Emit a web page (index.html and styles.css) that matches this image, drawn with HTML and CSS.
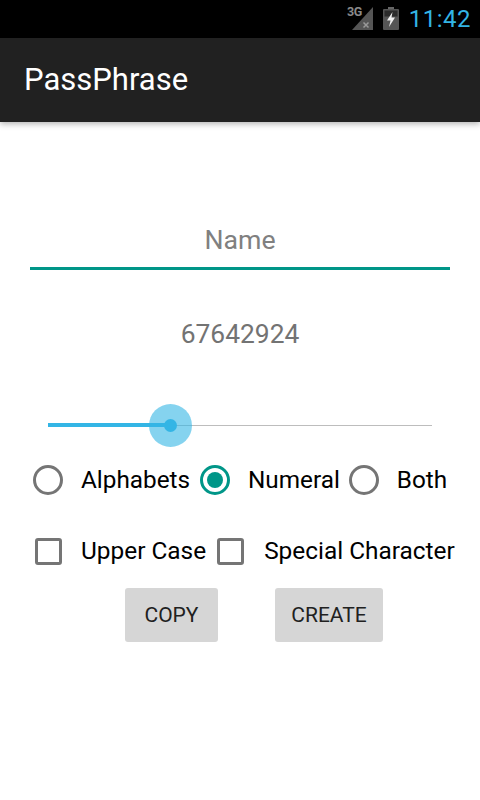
FILE: index.html
```html
<!DOCTYPE html>
<html lang="en">
<head>
<meta charset="utf-8">
<title>PassPhrase</title>
<link rel="stylesheet" href="styles.css">
</head>
<body>
<div class="status">
  <svg class="signal" width="22" height="23" viewBox="0 0 22 23">
    <polygon points="0,23 21,0 21,23" fill="#555"/>
    <path d="M11.5 15.5l5 5M16.5 15.5l-5 5" stroke="#999" stroke-width="1.5" fill="none"/>
  </svg>
  <span class="net">3G</span>
  <svg class="battery" width="16" height="23" viewBox="0 0 16 23">
    <rect x="5" y="0" width="6" height="3" fill="#666"/>
    <rect x="0" y="2" width="16" height="21" rx="1" fill="#555"/>
    <rect x="1.5" y="3.5" width="13" height="6" fill="#2b2b2b"/>
    <polygon points="9.5,5 4,13.5 7.5,13.5 6,20 12,10.5 8.5,10.5" fill="#eee"/>
  </svg>
  <span class="clock">11:42</span>
</div>
<header class="appbar">PassPhrase</header>
<main class="content">
  <div class="name">Name</div>
  <div class="code">67642924</div>
  <div class="slider">
    <div class="fill"></div>
    <div class="rest"></div>
    <div class="halo"><div class="dot"></div></div>
  </div>
  <div class="radios">
    <span class="radio"></span><span class="label first">Alphabets</span>
    <span class="radio on"></span><span class="label second">Numeral</span>
    <span class="radio"></span><span class="label">Both</span>
  </div>
  <div class="checks">
    <span class="check"></span><span class="label upper">Upper Case</span>
    <span class="check wide"></span><span class="label special">Special Character</span>
  </div>
  <div class="buttons">
    <button class="btn copy">COPY</button>
    <button class="btn create">CREATE</button>
  </div>
</main>
</body>
</html>
```
FILE: styles.css
```css
* { box-sizing: border-box; }
html, body { margin: 0; padding: 0; }
body {
  width: 480px;
  height: 800px;
  overflow: hidden;
  background: #fff;
  font-family: Roboto, sans-serif;
}
.status {
  position: relative;
  height: 38px;
  background: #000;
  display: flex;
  align-items: center;
  justify-content: flex-end;
  padding-right: 9px;
}
.signal { margin-right: 9px; margin-top: -1px; }
.net {
  position: absolute;
  left: 347px;
  top: 5px;
  font-size: 12.5px;
  font-weight: 700;
  line-height: 14px;
  letter-spacing: -0.3px;
  color: #8a8a8a;
}
.battery { margin-right: 10px; margin-top: -1px; }
.clock {
  font-size: 24px;
  line-height: 38px;
  color: #33b5e5;
  letter-spacing: 0.5px;
}
.appbar {
  height: 84px;
  background: #212121;
  color: #fff;
  font-size: 31px;
  line-height: 84px;
  padding-left: 24px;
  box-shadow: 0 2px 6px rgba(0, 0, 0, 0.3);
  position: relative;
}
.content { display: flex; flex-direction: column; }
.name {
  margin: 90px 30px 0;
  height: 58px;
  border-bottom: 3px solid #009688;
  color: #808080;
  font-size: 26.7px;
  line-height: 56px;
  text-align: center;
}
.code {
  margin-top: 46px;
  height: 36px;
  color: #737373;
  font-size: 26.4px;
  line-height: 36px;
  text-align: center;
}
.slider {
  position: relative;
  margin: 51px 48px 0;
  height: 44px;
  display: flex;
  align-items: center;
}
.fill { width: 122px; height: 4px; background: #33b5e5; }
.rest { flex: 1; height: 1px; background: #bdbdbd; }
.halo {
  position: absolute;
  left: 100.5px;
  top: 1px;
  width: 43px;
  height: 43px;
  border-radius: 50%;
  background: rgba(51, 181, 229, 0.6);
  display: flex;
  align-items: center;
  justify-content: center;
}
.dot { width: 13px; height: 13px; border-radius: 50%; background: #33b5e5; }
.radios, .checks {
  display: flex;
  align-items: center;
  color: #000;
}
.radios { margin-top: 16px; height: 34px; padding-left: 33px; font-size: 24.3px; }
.checks { margin-top: 37px; height: 34px; padding-left: 35px; font-size: 24.4px; }
.label { line-height: 34px; white-space: nowrap; }
.radio {
  flex: none;
  width: 30px;
  height: 30px;
  margin-right: 18px;
  border: 3px solid #757575;
  border-radius: 50%;
  display: flex;
  align-items: center;
  justify-content: center;
}
.radio.on { border-color: #009688; }
.radio.on::after {
  content: "";
  width: 16px;
  height: 16px;
  border-radius: 50%;
  background: #009688;
}
.first { margin-right: 10px; }
.second { margin-right: 9px; }
.check {
  flex: none;
  width: 27px;
  height: 27px;
  margin-right: 19px;
  border: 3px solid #757575;
  border-radius: 3px;
}
.check.wide { margin-right: 20px; }
.upper { margin-right: 11px; }
.buttons { display: flex; margin-top: 20px; padding-left: 125px; gap: 57px; }
.btn {
  height: 54px;
  border: 0;
  border-radius: 3px;
  background: #d6d6d6;
  color: #212121;
  font-family: Roboto, sans-serif;
  font-size: 21px;
  padding: 0;
}
.copy { width: 93px; }
.create { width: 108px; }
```
